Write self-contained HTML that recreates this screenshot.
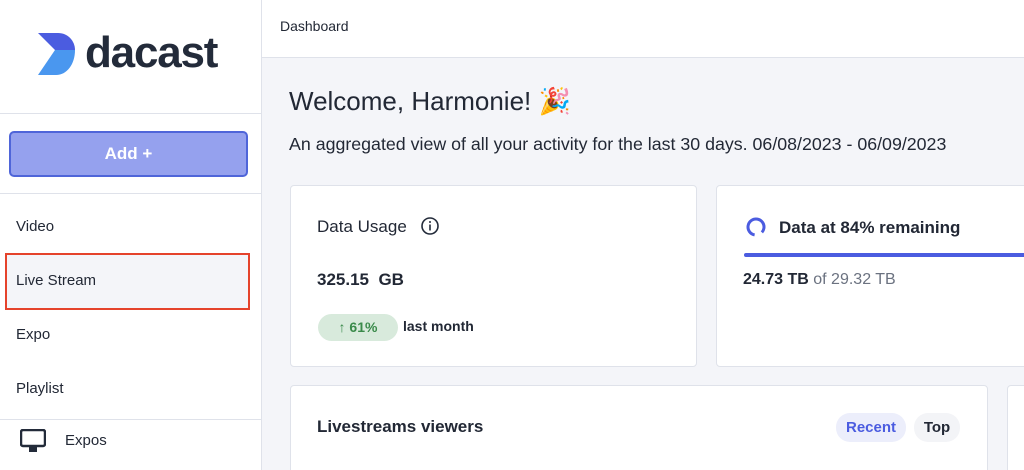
<!DOCTYPE html>
<html><head><style>
*{margin:0;padding:0;box-sizing:border-box}
html{height:470px;overflow:hidden}
body{width:1024px;height:470px;overflow:hidden;background:#f4f5f9;font-family:"Liberation Sans",sans-serif;color:#222835;position:relative}
.abs{position:absolute}
.card{position:absolute;background:#fff;border:1px solid #dfe2ea;border-radius:4px}
</style></head><body>
<div class="abs" style="left:262px;top:0;width:762px;height:58px;background:#fff;border-bottom:1px solid #dfe2ea"></div>
<div class="abs" style="left:280px;top:18px;font-size:14px">Dashboard</div>
<div class="abs" style="left:0;top:0;width:262px;height:470px;background:#fff;border-right:1px solid #dfe2ea"></div>
<svg class="abs" style="left:38px;top:33px" width="38" height="42" viewBox="0 0 38 42"><path d="M0 0H20C30 0 37 8 37 17L17 17Z" fill="#4b5ce0"/><path d="M17 17L37 17C37 31 29 42 18 42H0Z" fill="#4a97ef"/></svg>
<div class="abs" style="left:85px;top:28px;font-size:44px;font-weight:bold;letter-spacing:-1.2px;color:#232b3a">dacast</div>
<div class="abs" style="left:0;top:113px;width:262px;height:1px;background:#dfe2ea"></div>
<div class="abs" style="left:9px;top:131px;width:239px;height:46px;background:#95a1ee;border:2px solid #4f65d9;border-radius:5px;color:#fff;font-size:17px;font-weight:bold;text-align:center;line-height:42px">Add +</div>
<div class="abs" style="left:0;top:193px;width:261px;height:227px;background:#fff;border-top:1px solid #dfe2ea;border-bottom:1px solid #dfe2ea;font-size:15px">
<div class="abs" style="left:16px;top:24px">Video</div>
<div class="abs" style="left:5px;top:59px;width:245px;height:57px;background:#f4f5f9;border:2px solid #e5432c"></div>
<div class="abs" style="left:16px;top:78px">Live Stream</div>
<div class="abs" style="left:16px;top:132px">Expo</div>
<div class="abs" style="left:16px;top:186px">Playlist</div>
</div>
<svg class="abs" style="left:20px;top:429px" width="26" height="24" viewBox="0 0 26 24"><rect x="1" y="1" width="24" height="16" rx="2" fill="none" stroke="#232b3a" stroke-width="2.5"/><rect x="9" y="18" width="8" height="5" fill="#232b3a"/></svg>
<div class="abs" style="left:65px;top:432px;font-size:15px">Expos</div>
<div class="abs" style="left:289px;top:86px;font-size:26px">Welcome, Harmonie! 🎉</div>
<div class="abs" style="left:289px;top:134px;font-size:17.8px">An aggregated view of all your activity for the last 30 days. 06/08/2023 - 06/09/2023</div>
<div class="card" style="left:290px;top:185px;width:407px;height:182px">
<div class="abs" style="left:26px;top:31px;font-size:17px">Data Usage</div>
<svg class="abs" style="left:129px;top:30px" width="20" height="20"><circle cx="10" cy="10" r="8" fill="none" stroke="#232b3a" stroke-width="1.6"/><rect x="9.2" y="8.5" width="1.6" height="6" fill="#232b3a"/><circle cx="10" cy="6" r="1" fill="#232b3a"/></svg>
<div class="abs" style="left:26px;top:84px;font-size:17px;font-weight:bold">325.15&nbsp; GB</div>
<div class="abs" style="left:27px;top:128px;width:80px;height:27px;background:#d8eadc;border-radius:14px;color:#3a8a4a;font-size:14px;font-weight:bold;text-align:center;line-height:27px">↑ 61%</div>
<div class="abs" style="left:112px;top:132px;font-size:14px;font-weight:bold">last month</div>
</div>
<div class="card" style="left:716px;top:185px;width:330px;height:182px">
<svg class="abs" style="left:28px;top:30px" width="22" height="22"><circle cx="11" cy="11" r="8" fill="none" stroke="#4b5ce0" stroke-width="3" stroke-dasharray="42 8" transform="rotate(100 11 11)"/></svg>
<div class="abs" style="left:62px;top:32px;font-size:17px;font-weight:bold">Data at 84% remaining</div>
<div class="abs" style="left:27px;top:67px;width:310px;height:4px;background:#4b5ce0;border-radius:2px"></div>
<div class="abs" style="left:26px;top:85px;font-size:16px"><b>24.73 TB</b> <span style="color:#6b7280">of 29.32 TB</span></div>
</div>
<div class="card" style="left:290px;top:385px;width:698px;height:100px">
<div class="abs" style="left:26px;top:31px;font-size:17px;font-weight:bold">Livestreams viewers</div>
<div class="abs" style="left:545px;top:27px;width:70px;height:29px;background:#eceefb;border-radius:14px;color:#4b5ce0;font-size:15px;font-weight:bold;text-align:center;line-height:29px">Recent</div>
<div class="abs" style="left:623px;top:27px;width:46px;height:29px;background:#f3f4f7;border-radius:14px;font-size:15px;font-weight:bold;text-align:center;line-height:29px">Top</div>
</div>
<div class="card" style="left:1007px;top:385px;width:40px;height:100px"></div>
</body></html>
